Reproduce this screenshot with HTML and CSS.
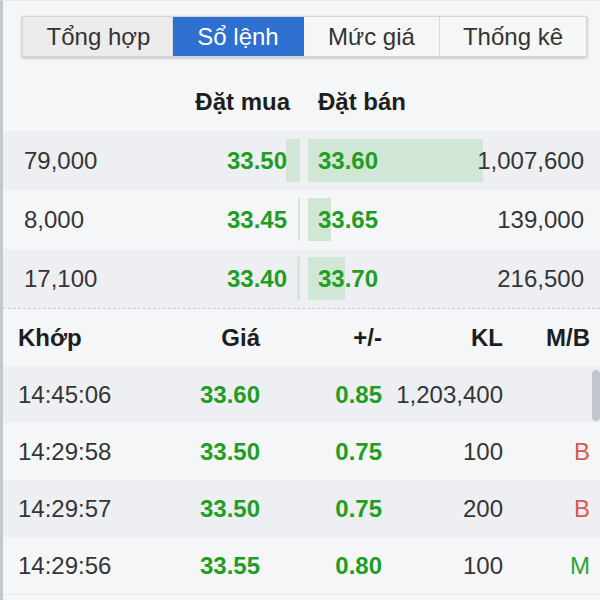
FILE: index.html
```html
<!DOCTYPE html>
<html lang="vi">
<head>
    <meta charset="UTF-8">
    <meta name="viewport" content="width=device-width, initial-scale=1.0">
    <title>Sổ lệnh</title>
    <link rel="stylesheet" href="styles.css">
</head>
<body>
    <div class="panel">

        <div class="tabs">
            <div class="tab tab-hover">Tổng hợp</div>
            <div class="tab active">Sổ lệnh</div>
            <div class="tab">Mức giá</div>
            <div class="tab">Thống kê</div>
        </div>

        <div class="book">
            <div class="book-row book-head">
                <div class="bid-side"><span class="price">Đặt mua</span></div>
                <div class="ask-side"><span class="price">Đặt bán</span></div>
            </div>

            <div class="book-row dark">
                <div class="bid-side">
                    <span class="bar" style="width: 13px"></span>
                    <span class="qty">79,000</span>
                    <span class="price up">33.50</span>
                </div>
                <div class="ask-side">
                    <span class="bar" style="width: 175px"></span>
                    <span class="price up">33.60</span>
                    <span class="qty">1,007,600</span>
                </div>
            </div>

            <div class="book-row">
                <div class="bid-side">
                    <span class="bar" style="width: 1px"></span>
                    <span class="qty">8,000</span>
                    <span class="price up">33.45</span>
                </div>
                <div class="ask-side">
                    <span class="bar" style="width: 23px"></span>
                    <span class="price up">33.65</span>
                    <span class="qty">139,000</span>
                </div>
            </div>

            <div class="book-row dark">
                <div class="bid-side">
                    <span class="bar" style="width: 2px"></span>
                    <span class="qty">17,100</span>
                    <span class="price up">33.40</span>
                </div>
                <div class="ask-side">
                    <span class="bar" style="width: 37px"></span>
                    <span class="price up">33.70</span>
                    <span class="qty">216,500</span>
                </div>
            </div>
        </div>

        <div class="trades">
            <div class="trade-row trade-head">
                <span>Khớp</span>
                <span class="r">Giá</span>
                <span class="r">+/-</span>
                <span class="r">KL</span>
                <span class="r">M/B</span>
            </div>

            <div class="trade-list">
                <div class="trade-row dark">
                    <span>14:45:06</span>
                    <span class="r up">33.60</span>
                    <span class="r up">0.85</span>
                    <span class="r">1,203,400</span>
                    <span class="r"></span>
                </div>
                <div class="trade-row">
                    <span>14:29:58</span>
                    <span class="r up">33.50</span>
                    <span class="r up">0.75</span>
                    <span class="r">100</span>
                    <span class="r side-b">B</span>
                </div>
                <div class="trade-row dark">
                    <span>14:29:57</span>
                    <span class="r up">33.50</span>
                    <span class="r up">0.75</span>
                    <span class="r">200</span>
                    <span class="r side-b">B</span>
                </div>
                <div class="trade-row">
                    <span>14:29:56</span>
                    <span class="r up">33.55</span>
                    <span class="r up">0.80</span>
                    <span class="r">100</span>
                    <span class="r side-m">M</span>
                </div>

                <div class="scroll-thumb"></div>
            </div>
        </div>

    </div>
</body>
</html>
```

FILE: styles.css
```css
* {
    margin: 0;
    padding: 0;
    box-sizing: border-box;
}

body {
    background-color: #f5f6f8;
    font-family: "Liberation Sans", Arial, sans-serif;
    font-size: 24px;
    color: #353535;
}

.panel {
    width: 600px;
    height: 600px;
    overflow: hidden;
    border-left: 3px solid #c3c7cf;
    border-top: 1px solid #e6e8ec;
    background-color: #f5f6f8;
}

/* tabs */

.tabs {
    display: flex;
    height: 41px;
    margin: 15px 13px 0 19px;
    border: 1px solid #d3d5d9;
    box-shadow: 0 1px 3px rgba(0, 0, 0, 0.25);
    background-color: #f6f6f7;
}

.tab {
    display: flex;
    align-items: center;
    justify-content: center;
    white-space: nowrap;
    color: #333;
    border-right: 1px solid #d6d8dc;
}

.tab:nth-child(1) {
    width: 150px;
    padding-left: 2px;
}

.tab:nth-child(2) {
    width: 131px;
}

.tab:nth-child(3) {
    width: 136px;
}

.tab:last-child {
    flex: 1;
    border-right: none;
}

.tab-hover {
    background-color: #ececed;
}

.tab.active {
    background-color: #2e6fd0;
    color: #fff;
    border-right-color: #2e6fd0;
}

/* order book */

.book {
    margin-top: 15px;
    border-bottom: 1px dashed #c9cdd3;
}

.book-row {
    display: grid;
    grid-template-columns: 297px 1fr;
    column-gap: 8px;
    height: 59px;
    padding: 8px 3px 8px 0;
}

.book-row.dark {
    background-color: #edeff3;
}

.bid-side,
.ask-side {
    position: relative;
    display: flex;
    align-items: center;
    justify-content: space-between;
}

.bid-side {
    padding: 0 12px 0 21px;
    border-right: 1px solid #dcdfe3;
}

.ask-side {
    padding: 0 13px 0 10px;
}

.book-head .bid-side {
    justify-content: flex-end;
    padding-right: 10px;
    border-right: none;
}

.book-head .price {
    font-weight: 700;
    color: #1e1e1e;
}

.bar {
    position: absolute;
    top: 0;
    bottom: 0;
    background-color: #cfe7d4;
}

.bid-side .bar {
    right: 0;
}

.ask-side .bar {
    left: 0;
}

.qty,
.price {
    position: relative;
}

.up {
    color: #1f9e24;
    font-weight: 700;
}

/* matched trades */

.trade-row {
    display: grid;
    grid-template-columns: 140px 102px 122px 121px 87px;
    align-items: center;
    height: 57px;
    padding-left: 15px;
}

.trade-row.dark {
    background-color: #edeff3;
}

.trade-head {
    font-weight: 700;
    color: #1e1e1e;
}

.trade-row .r {
    text-align: right;
}

.trade-list {
    position: relative;
    border-bottom: 1px solid #e4e6ea;
}

.side-b {
    color: #e0564e;
}

.side-m {
    color: #2ea232;
}

.scroll-thumb {
    position: absolute;
    top: 4px;
    right: 0;
    width: 8px;
    height: 51px;
    border-radius: 4px;
    background-color: #c2c6cd;
}
```
